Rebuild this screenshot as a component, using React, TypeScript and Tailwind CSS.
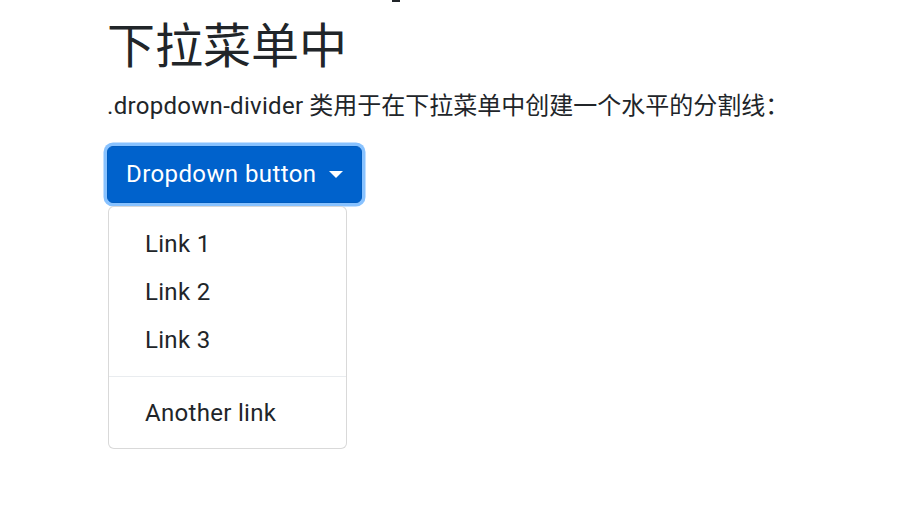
import React from "react";

// Bootstrap 4 style dropdown at 150% zoom
const LINKS = ["Link 1", "Link 2", "Link 3"];

export default function App() {
  return (
    <div className="min-h-[530px] bg-white text-[#212529] font-['Segoe_UI','Roboto','Noto_Sans_CJK_SC',sans-serif]">
      {/* descender of a line scrolled off the top */}
      <div className="h-[2px] pl-[392px]">
        <div className="w-[8px] h-[2px] bg-[#212529]" />
      </div>

      <div className="pl-[107px] pt-[14px]">
        <h2 className="text-[48px] leading-[1.2] font-normal mb-[12px] pt-[2px]">下拉菜单中</h2>
        <p className="text-[24px] leading-[36px] mb-[22px]">
          <span className="tracking-[0.3px]">.dropdown-divider</span> 类用于在下拉菜单中创建一个水平的分割线：
        </p>

        <div className="inline-flex flex-col items-start">
          <button
            className="
              inline-flex items-center h-[57px] px-[18px]
              bg-[#0062cc] border border-[#005cbf] rounded-[6px]
              text-white text-[24px] leading-[36px] tracking-[0.4px]
              shadow-[0_0_0_3.5px_rgba(38,143,255,0.55)]
            "
          >
            Dropdown button
            <span className="inline-block ml-[13px] w-0 h-0 border-t-[7px] border-x-[7px] border-x-transparent border-t-white" />
          </button>

          <div className="mt-[3px] ml-[1px] w-[239px] bg-white border border-black/15 rounded-[6px] pt-[13px] pb-[11px] tracking-[0.3px]">
            {LINKS.map((l) => (
              <div key={l} className="px-[36px] py-[6px] text-[24px] leading-[36px]">
                {l}
              </div>
            ))}
            <div className="my-[12px] border-t border-[#e9ecef]" />
            <div className="px-[36px] py-[6px] text-[24px] leading-[36px]">Another link</div>
          </div>
        </div>
      </div>
    </div>
  );
}
